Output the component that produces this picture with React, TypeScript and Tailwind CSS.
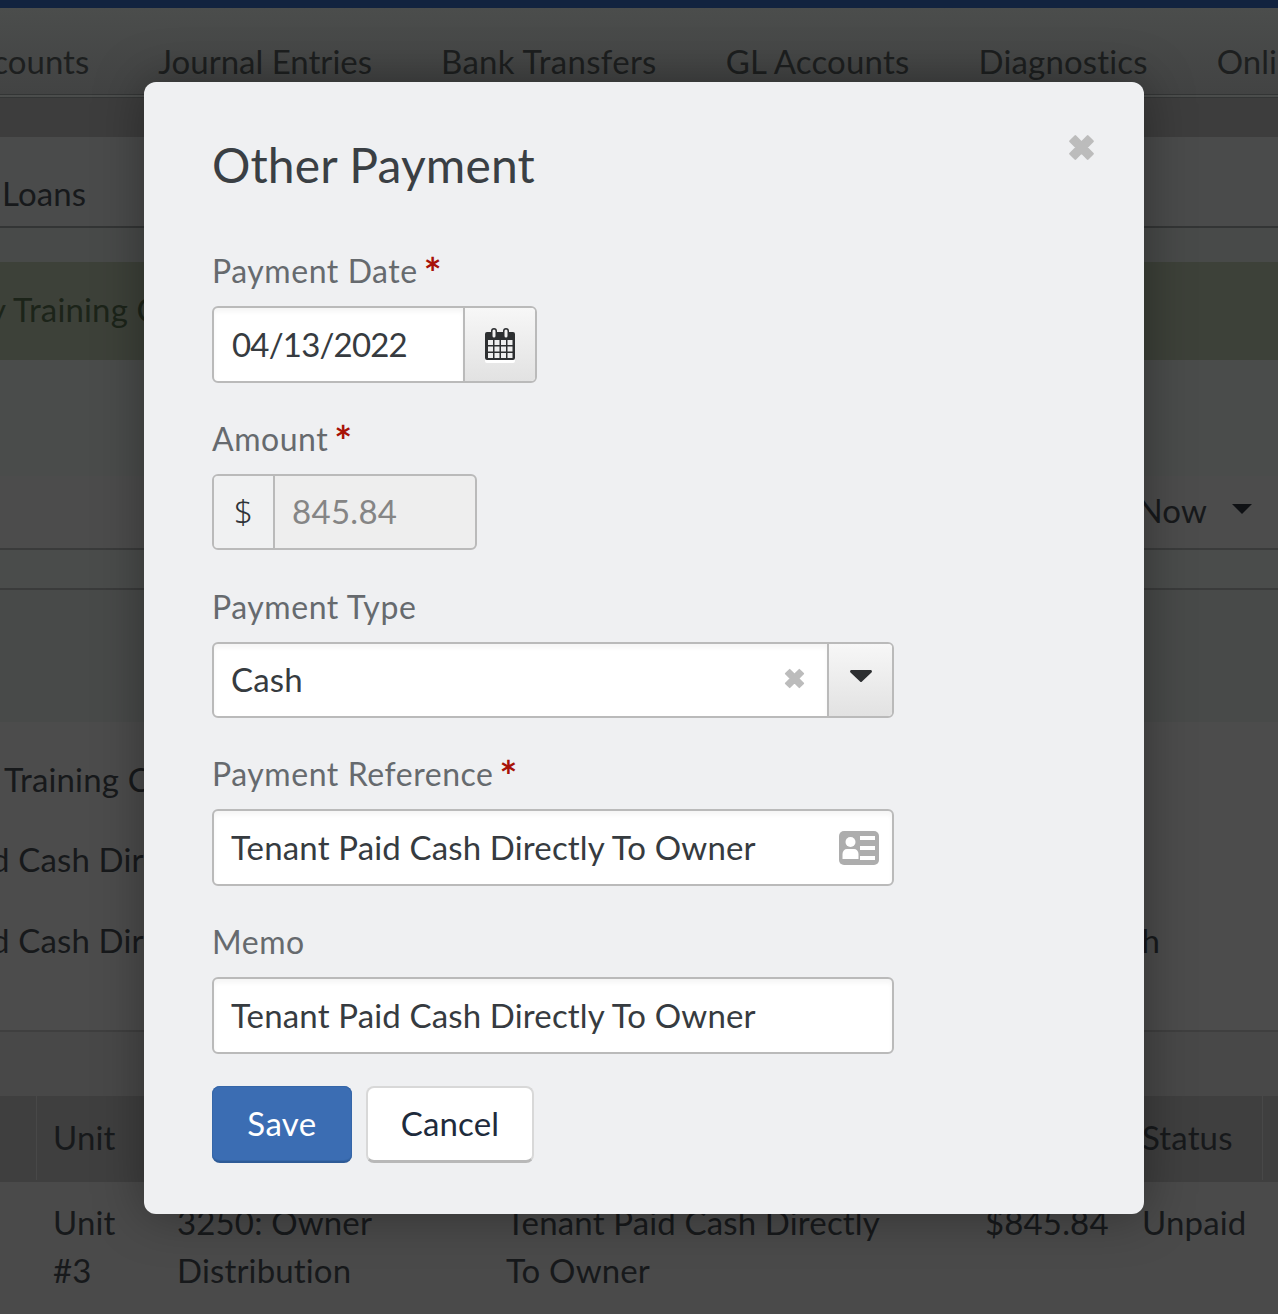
const font = "font-['Lato','Noto_Sans',sans-serif]";

function CloseIcon({ className }: { className: string }) {
  return (
    <svg viewBox="0 0 24 24" className={className} fill="currentColor" stroke="currentColor" strokeWidth="2" strokeLinejoin="round">
      <path d="M2 6.500 6.500 2 12 7.500 17.500 2 22 6.500 16.500 12 22 17.500 17.500 22 12 16.500 6.500 22 2 17.500 7.500 12Z" />
    </svg>
  );
}

function CalendarIcon() {
  return (
    <svg viewBox="0 0 32 36" className="h-[36px] w-[32px]">
      <rect x="1" y="6" width="30" height="30" rx="2" fill="#ffffff" />
      <path fill="#2d2f31" d="M3 5h4V4a3 3 0 0 1 6 0v1h6V4a3 3 0 0 1 6 0v1h4a2 2 0 0 1 2 2v24a2 2 0 0 1-2 2H3a2 2 0 0 1-2-2V7a2 2 0 0 1 2-2Z" />
      <rect x="8.500" y="2.500" width="3" height="8" rx="1.500" fill="#f0f0f0" />
      <rect x="20.500" y="2.500" width="3" height="8" rx="1.500" fill="#f0f0f0" />
      <g fill="#eeeeee">
        <rect x="4" y="13" width="5" height="5" />
        <rect x="10.500" y="13" width="5" height="5" />
        <rect x="17" y="13" width="5" height="5" />
        <rect x="23.500" y="13" width="5" height="5" />
        <rect x="4" y="19.500" width="5" height="5" />
        <rect x="10.500" y="19.500" width="5" height="5" />
        <rect x="17" y="19.500" width="5" height="5" />
        <rect x="23.500" y="19.500" width="5" height="5" />
        <rect x="4" y="26" width="5" height="5" />
        <rect x="10.500" y="26" width="5" height="5" />
        <rect x="17" y="26" width="5" height="5" />
        <rect x="23.500" y="26" width="5" height="5" />
      </g>
    </svg>
  );
}

function CardIcon() {
  return (
    <svg viewBox="0 0 40 34" className="h-[34px] w-[40px]">
      <rect x="0" y="0" width="40" height="34" rx="5" fill="#adadad" />
      <circle cx="11.500" cy="11" r="5" fill="#fff" />
      <path fill="#fff" d="M3.500 28v-5c0-3 2-5 4.500-5h7c2.500 0 4.500 2 4.500 5v5Z" />
      <rect x="21" y="5" width="15" height="4" fill="#fff" />
      <rect x="21" y="15" width="15" height="4" fill="#fff" />
      <rect x="21" y="25" width="15" height="4" fill="#fff" />
    </svg>
  );
}

function Label({ text, required }: { text: string; required?: boolean }) {
  return (
    <div className="-mt-px mb-px flex h-[52px] items-start text-[32px] leading-[36px] tracking-[0.55px] text-[#666a6e]">
      <span>{text}</span>
      {required && (
        <span className="ml-[6px] text-[42px] font-bold leading-[40px] text-[#a81208]">*</span>
      )}
    </div>
  );
}

function TextField({ value, icon }: { value: string; icon?: boolean }) {
  return (
    <div className="flex h-[77px] w-[682px] items-center justify-between rounded-[6px] border-2 border-[#bababa] bg-white pl-[17px] pr-[13px] text-[33px] tracking-[0.15px] text-[#363b40] shadow-[inset_0_4px_4px_rgba(0,0,0,0.04)]">
      <span>{value}</span>
      {icon && <CardIcon />}
    </div>
  );
}

function Modal() {
  return (
    <div className="absolute left-[144px] top-[82px] h-[1132px] w-[1000px] rounded-[12px] bg-[#eff0f2] pl-[68px] pt-[52px] shadow-[0_0_50px_rgba(0,0,0,0.35)]">
      <CloseIcon className="absolute left-[924px] top-[52px] h-[27px] w-[27px] text-[#bcbcbc]" />
      <h1 className="h-[120px] text-[48px] font-normal leading-[62px] text-[#3a3f44]">Other Payment</h1>

      <Label text="Payment Date" required />
      <div className="flex h-[77px] w-[325px] overflow-hidden rounded-[6px] border-2 border-[#bababa] bg-white">
        <div className="flex flex-1 items-center pl-[18px] text-[33px] tracking-[-0.8px] text-[#363b40] shadow-[inset_0_4px_4px_rgba(0,0,0,0.04)]">
          04/13/2022
        </div>
        <div className="flex w-[72px] items-center justify-center border-l-2 border-[#bababa] bg-linear-to-b from-[#f7f7f7] to-[#e2e2e2]">
          <CalendarIcon />
        </div>
      </div>

      <div className="h-[39px]" />
      <Label text="Amount" required />
      <div className="flex h-[76px] w-[265px] overflow-hidden rounded-[6px] border-2 border-[#bababa] bg-[#eeeeee]">
        <div className="flex w-[61px] items-center justify-center border-r-2 border-[#bababa] bg-[#f0f1f2] font-['Noto_Sans',sans-serif] text-[33px] font-light text-[#2f3438]">
          $
        </div>
        <div className="flex flex-1 items-center pl-[17px] text-[33px] tracking-[0.3px] text-[#858585]">845.84</div>
      </div>

      <div className="h-[40px]" />
      <Label text="Payment Type" />
      <div className="flex h-[76px] w-[682px] overflow-hidden rounded-[6px] border-2 border-[#bababa] bg-white">
        <div className="flex flex-1 items-center justify-between pl-[17px] pr-[22px] text-[33px] text-[#363b40] shadow-[inset_0_4px_4px_rgba(0,0,0,0.04)]">
          <span>Cash</span>
          <CloseIcon className="mb-[4px] h-[21px] w-[21px] text-[#bcbcbc]" />
        </div>
        <div className="flex w-[65px] items-center justify-center border-l-2 border-[#bababa] bg-linear-to-b from-[#f7f7f7] to-[#e2e2e2] pb-[8px]">
          <svg viewBox="0 0 22 12" className="h-[12px] w-[22px]">
            <path fill="#2d2f31" d="M1.500 0h19c1.300 0 1.900 1.500 1 2.400l-9.500 9a1.400 1.400 0 0 1-2 0L.5 2.400C-.4 1.500.2 0 1.500 0Z" />
          </svg>
        </div>
      </div>

      <div className="h-[39px]" />
      <Label text="Payment Reference" required />
      <TextField value="Tenant Paid Cash Directly To Owner" icon />

      <div className="h-[39px]" />
      <Label text="Memo" />
      <TextField value="Tenant Paid Cash Directly To Owner" />

      <div className="mt-[32px] flex gap-[14px]">
        <button type="button" className="h-[77px] w-[140px] rounded-[8px] border-b-2 border-[#2d5a96] bg-[#3b6db3] text-[33px] tracking-[0.4px] text-white shadow-[0_0_0_1px_#3566a8_inset]">
          Save
        </button>
        <button type="button" className="h-[77px] w-[168px] rounded-[8px] border-2 border-b-[3px] border-[#d8d8d8] border-b-[#b8b8b8] bg-white text-[33px] text-[#1e2b3c]">
          Cancel
        </button>
      </div>
    </div>
  );
}

export default function App() {
  return (
    <div className={`relative h-[1314px] w-[1278px] overflow-hidden bg-[#4a4a4a] text-[33px] tracking-[0.15px] text-[#17191b] ${font}`}>
      <div className="h-2 bg-[#12233f]" />
      <nav className="flex h-[90px] items-center gap-[69px] overflow-hidden whitespace-nowrap border-b-[4px] border-double border-[#333535] bg-linear-to-b from-[#4b4d4c] to-[#424343] pt-[22px] tracking-normal text-[#1d1f1f]">
        <span className="-ml-[45px]">Accounts</span>
        <span>Journal Entries</span>
        <span className="tracking-[0.3px]">Bank Transfers</span>
        <span className="tracking-[0.2px]">GL Accounts</span>
        <span className="tracking-[0.15px]">Diagnostics</span>
        <span>Online</span>
      </nav>
      <div className="h-[39px] bg-[#3d3d3d]" />
      <div className="flex h-[91px] items-center overflow-hidden border-b-2 border-[#333535] bg-[#4a4b4b] pl-[2px] pt-[24px]">Loans</div>
      <div className="h-[34px] bg-[#484a49]" />
      <div className="flex h-[98px] items-center overflow-hidden whitespace-nowrap bg-[#3d4139] pb-[2px] text-[#1c2419]">
        <span className="-ml-[11px]">y Training Checks</span>
      </div>
      <div className="h-[116px] bg-[#4a4c4b]" />
      <div className="flex h-[74px] items-center justify-end gap-[25px] border-b-2 border-[#3a3b3b] bg-[#4c4c4c] pr-[26px] pb-[2px]">
        <span>Now</span>
        <svg viewBox="0 0 20 10" className="mb-[4px] h-[10px] w-[20px]">
          <path fill="#0f1114" d="M0 0h20L10 10Z" />
        </svg>
      </div>
      <div className="h-[40px] border-b-2 border-[#3a3b3b] bg-[#4a4c4b]" />
      <div className="h-[132px] bg-[#484a49]" />
      <div className="h-[310px] border-b-[2px] border-[#3f3f3f] bg-[#4c4c4c]">
        <div className="flex h-[98px] items-end pb-[16px] pl-[4px]">Training Checks</div>
        <div className="flex h-[80px] items-center">
          <span className="-ml-[9px]">d Cash Directly</span>
        </div>
        <div className="flex h-[81px] items-center justify-between pr-[118px]">
          <span className="-ml-[9px]">d Cash Directly</span>
          <span>Cash</span>
        </div>
      </div>
      <div className="h-[64px] bg-[#484848]" />
      <div className="grid h-[86px] grid-cols-[36px_1px_16px_1089px_120px_1px_15px] items-center bg-[#3f3f3f] pb-[2px]">
        <div />
        <div className="h-full bg-[#484848]" />
        <div />
        <span>Unit</span>
        <span>Status</span>
        <div className="h-full bg-[#484848]" />
        <div />
      </div>
      <div className="grid grid-cols-[177px_329px_479px_157px_1fr] pt-[16px] leading-[48px]">
        <div className="pl-[53px]">
          Unit
          <br />
          #3
        </div>
        <div>
          3250: Owner
          <br />
          Distribution
        </div>
        <div>
          Tenant Paid Cash Directly
          <br />
          To Owner
        </div>
        <div>$845.84</div>
        <div>Unpaid</div>
      </div>
      <Modal />
    </div>
  );
}
